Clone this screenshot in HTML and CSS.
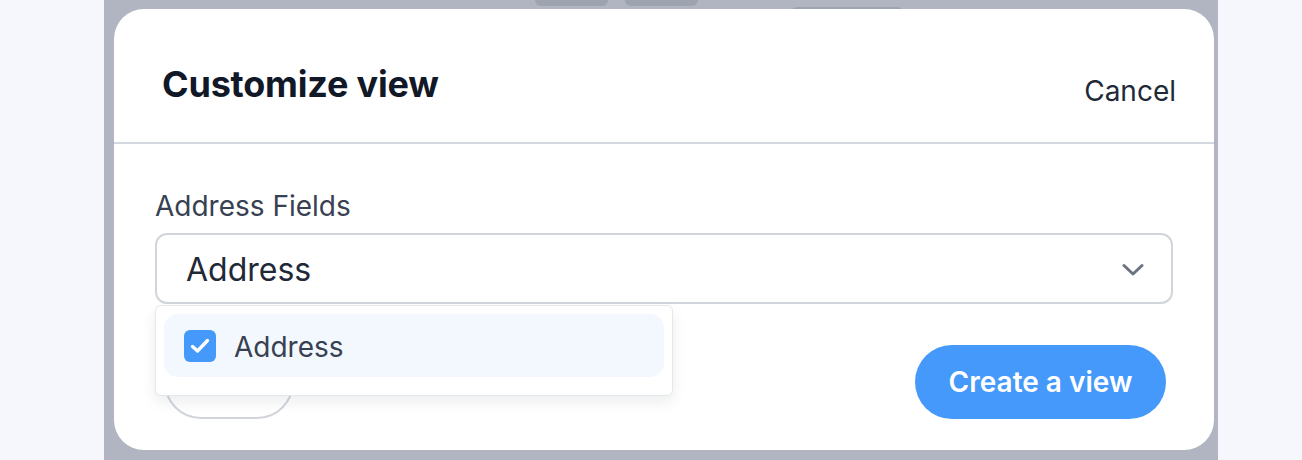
FILE: index.html
```html
<!DOCTYPE html>
<html lang="en">
<head>
<meta charset="utf-8">
<title>Customize view</title>
<link rel="stylesheet" href="styles.css">
</head>
<body>
<div class="page">
  <div class="backdrop">
    <div class="bg-strip">
      <span class="ghost g1"></span><span class="ghost g2"></span><span class="ghost g3"></span>
    </div>
    <div class="modal">
      <div class="modal-header">
        <h2 class="title">Customize view</h2>
        <button class="cancel-link">Cancel</button>
      </div>
      <div class="modal-body">
        <div class="label">Address Fields</div>
        <div class="select-wrap">
          <div class="select">
            <span class="select-value">Address</span>
            <svg class="chevron" width="22" height="14" viewBox="0 0 22 14"><path d="M2 2.5 L11 11 L20 2.5" fill="none" stroke="#6b7280" stroke-width="3" stroke-linecap="round" stroke-linejoin="round"/></svg>
          </div>
          <div class="menu">
            <div class="menu-item">
              <span class="checkbox"><svg width="22" height="18" viewBox="0 0 22 18"><path d="M3.5 9.5 L8.5 14 L18.5 3.5" fill="none" stroke="#fff" stroke-width="3.4" stroke-linecap="round" stroke-linejoin="round"/></svg></span>
              <span class="menu-text">Address</span>
            </div>
          </div>
        </div>
        <div class="footer">
          <button class="btn-outline">Cancel</button>
          <button class="btn-primary">Create a view</button>
        </div>
      </div>
    </div>
  </div>
</div>
</body>
</html>
```
FILE: styles.css
```css
* { box-sizing: border-box; }
html, body { margin: 0; padding: 0; }
body {
  background: #f5f7fc;
  font-family: Inter, "Noto Sans", sans-serif;
  width: 1302px;
  height: 460px;
  overflow: hidden;
}
.page {
  display: flex;
  height: 460px;
}
.backdrop {
  margin-left: 104px;
  width: 1114px;
  height: 460px;
  background: #b1b5c1;
  padding: 9px 4px 0 10px;
  position: relative;
}
.bg-strip {
  position: absolute;
  top: 0;
  left: 0;
  right: 0;
  height: 9px;
}
.ghost {
  position: absolute;
  height: 12px;
  border-radius: 6px;
  background: #9ea3b0;
}
.g1 { left: 431px; top: -6px; width: 73px; }
.g2 { left: 521px; top: -6px; width: 73px; }
.g3 { left: 687px; top: 7px; width: 112px; }
.modal {
  position: relative;
  width: 1100px;
  height: 441px;
  background: #ffffff;
  border-radius: 30px;
  display: flex;
  flex-direction: column;
}
.modal-header {
  height: 135px;
  display: flex;
  justify-content: space-between;
  align-items: flex-start;
  padding: 0 38px 0 48px;
  border-bottom: 2px solid #d6d8df;
}
.title {
  margin: 51px 0 0 0;
  font-size: 36px;
  font-weight: 700;
  color: #111827;
  line-height: 48px;
  letter-spacing: -0.2px;
}
.cancel-link {
  margin-top: 64px;
  background: none;
  border: none;
  padding: 0;
  font-family: inherit;
  font-size: 28px;
  color: #1f2937;
  line-height: 36px;
}
.modal-body {
  padding: 45px 41px 0 41px;
  display: flex;
  flex-direction: column;
}
.label {
  font-size: 28px;
  color: #374151;
  line-height: 34px;
  margin-bottom: 10px;
}
.select-wrap {
  position: relative;
}
.select {
  height: 71px;
  border: 2px solid #d1d5db;
  border-radius: 12px;
  display: flex;
  align-items: center;
  justify-content: space-between;
  padding: 0 27px 0 29px;
}
.select-value {
  font-size: 32px;
  color: #1f2937;
  margin-top: 2px;
}
.chevron {
  margin-top: 2px;
}
.menu {
  position: absolute;
  top: 72px;
  left: 0;
  width: 518px;
  height: 91px;
  background: #ffffff;
  border: 1px solid #e5e7eb;
  border-radius: 6px;
  box-shadow: 0 6px 14px rgba(17, 24, 39, 0.08);
  padding: 8px;
  z-index: 2;
}
.menu-item {
  height: 63px;
  background: #f3f8fe;
  border-radius: 14px;
  display: flex;
  align-items: center;
  padding-left: 20px;
}
.checkbox {
  width: 32px;
  height: 32px;
  border-radius: 6px;
  background: #4499fa;
  display: flex;
  align-items: center;
  justify-content: center;
  margin-right: 18px;
}
.menu-text {
  font-size: 28px;
  color: #374151;
  margin-top: 3px;
}
.footer {
  display: flex;
  justify-content: space-between;
  align-items: center;
  margin-top: 41px;
  padding: 0 7px 0 9px;
}
.btn-outline {
  width: 130px;
  height: 74px;
  border: 2px solid #d1d5db;
  border-radius: 37px;
  background: #fff;
  font-family: inherit;
  font-size: 26px;
  color: #374151;
}
.btn-primary {
  width: 251px;
  height: 74px;
  border: none;
  border-radius: 37px;
  background: #4499fa;
  color: #ffffff;
  font-family: inherit;
  font-size: 28px;
  font-weight: 600;
}
```
